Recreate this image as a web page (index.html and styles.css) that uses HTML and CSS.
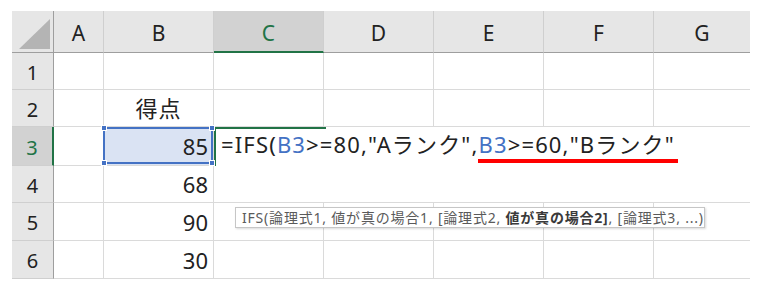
FILE: index.html
```html
<!DOCTYPE html>
<html lang="ja">
<head>
<meta charset="utf-8">
<link rel="stylesheet" href="styles.css">
</head>
<body>
<div class="sheet">
  <div class="corner"><div class="tri"></div></div>
  <div class="ch">A</div>
  <div class="ch">B</div>
  <div class="ch sel">C</div>
  <div class="ch">D</div>
  <div class="ch">E</div>
  <div class="ch">F</div>
  <div class="ch last">G</div>

  <div class="rh">1</div>
  <div class="cell"></div><div class="cell"></div><div class="cell"></div><div class="cell"></div><div class="cell"></div><div class="cell"></div><div class="cell last"></div>

  <div class="rh">2</div>
  <div class="cell"></div><div class="cell center">得点</div><div class="cell"></div><div class="cell"></div><div class="cell"></div><div class="cell"></div><div class="cell last"></div>

  <div class="rh sel">3</div>
  <div class="cell"></div>
  <div class="cell num active">85
    <div class="selbox"><span class="h tl"></span><span class="h tr"></span><span class="h bl"></span><span class="h br"></span></div>
  </div>
  <div class="edit">
    <div class="mark"></div>
    <div class="formula">=IFS(<span class="ref">B3</span>&gt;=80,"Aランク",<span class="ul"><span class="ref">B3</span>&gt;=60,"Bランク"</span></div>
  </div>

  <div class="rh">4</div>
  <div class="cell"></div><div class="cell num">68</div>

  <div class="rh">5</div>
  <div class="cell"></div><div class="cell num">90</div><div class="cell"></div><div class="cell"></div><div class="cell"></div><div class="cell"></div><div class="cell last"></div>

  <div class="rh">6</div>
  <div class="cell"></div><div class="cell num">30</div><div class="cell"></div><div class="cell"></div><div class="cell"></div><div class="cell"></div><div class="cell last"></div>

  <div class="tip">IFS(論理式1, 値が真の場合1, [論理式2, <b>値が真の場合2]</b>, [論理式3, ...)</div>
</div>
</body>
</html>
```

FILE: styles.css
```css
* { box-sizing: border-box; }
body {
  margin: 0;
  background: #fff;
  font-family: "Noto Sans", "Noto Sans CJK JP", sans-serif;
  color: #222;
}
.sheet {
  position: relative;
  margin: 11px 0 0 12px;
  width: 738px;
  display: grid;
  grid-template-columns: 42px 50px 110px 110px 110px 110px 110px 96px;
  grid-template-rows: 42px 37px 37px 39px 37px 38px 38px;
}
.corner {
  background: #e6e6e6;
  border-right: 1px solid #9e9e9e;
  border-bottom: 1px solid #9e9e9e;
  display: flex;
  justify-content: flex-end;
  align-items: flex-end;
  padding: 0 3px 3px 0;
}
.tri {
  width: 31px;
  height: 30px;
  background: #b4b4b4;
  clip-path: polygon(100% 0, 100% 100%, 0 100%);
}
.ch {
  background: #e6e6e6;
  border-right: 1px solid #cfcfcf;
  border-bottom: 1px solid #9e9e9e;
  display: flex;
  align-items: center;
  justify-content: center;
  font-size: 21px;
  padding-top: 3px;
}
.ch.sel {
  background: #d2d2d2;
  color: #217346;
  border-bottom: 2px solid #217346;
}
.ch.last { border-right: none; }
.rh {
  background: #e6e6e6;
  border-right: 1px solid #9e9e9e;
  border-bottom: 1px solid #cfcfcf;
  display: flex;
  align-items: center;
  justify-content: center;
  font-size: 20px;
  padding-top: 2px;
}
.rh.sel {
  background: #d2d2d2;
  color: #217346;
  border-right: 2px solid #217346;
}
.cell {
  border-right: 1px solid #dadada;
  border-bottom: 1px solid #dadada;
  font-size: 22px;
  line-height: 22px;
  display: flex;
  align-items: flex-end;
  justify-content: flex-end;
  padding: 0 5px 7px 0;
}
.cell.last { border-right: none; }
.cell.center { justify-content: center; padding: 0 0 7px 0; letter-spacing: 1px; }
.cell.active {
  position: relative;
  background: #dae3f3;
  padding-bottom: 8px;
}
.selbox {
  position: absolute;
  left: -1px;
  right: 0;
  top: 0;
  bottom: 1px;
  border: 2px solid #4472c4;
  z-index: 3;
}
.h {
  position: absolute;
  width: 6px;
  height: 6px;
  background: #4472c4;
  border: 1px solid #fff;
}
.h.tl { left: -4px; top: -4px; }
.h.tr { right: -4px; top: -4px; }
.h.bl { left: -4px; bottom: -4px; }
.h.br { right: -4px; bottom: -4px; }
.edit {
  grid-column: 4 / 9;
  grid-row: 4 / 6;
  position: relative;
  background: #fff;
  border-bottom: 1px solid #dadada;
}
.mark {
  position: absolute;
  left: 0;
  top: 0;
  width: 112px;
  height: 39px;
  border-top: 2px solid #217346;
  border-left: 2px solid #217346;
}
.formula {
  position: relative;
  padding-left: 7px;
  font-size: 22px;
  line-height: 34px;
  letter-spacing: 1.15px;
  white-space: nowrap;
  color: #222;
}
.ref { color: #4472c4; }
.ul {
  border-bottom: 4px solid #ff0000;
  padding-right: 3px;
}
.tip {
  position: absolute;
  left: 223px;
  top: 196px;
  width: 470px;
  height: 21px;
  background: #fff;
  border: 1px solid #c6c6c6;
  box-shadow: 1px 1px 2px rgba(0,0,0,0.15);
  font-size: 14px;
  line-height: 19px;
  letter-spacing: 0.8px;
  color: #5a5a5a;
  padding: 0 6px;
  white-space: nowrap;
  z-index: 4;
}
.tip b { color: #3a3a3a; }
```
